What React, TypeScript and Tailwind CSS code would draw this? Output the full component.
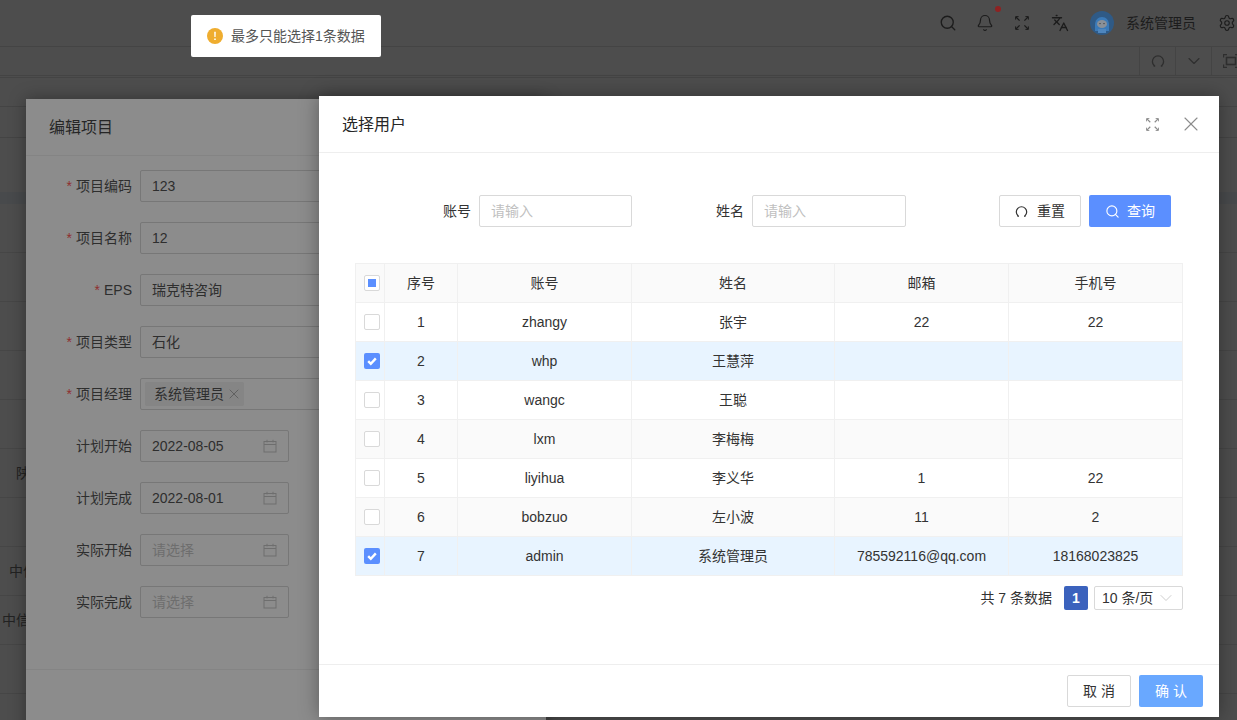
import { Bell, ChevronDown, Languages, Search, Settings, X } from "lucide-react";

const font = { fontFamily: '"Liberation Sans", "Noto Sans CJK SC", sans-serif' };

interface IconProps {
  className?: string;
}

const ExpandIcon = ({ className }: IconProps) => (
  <svg viewBox="0 0 14 14" className={className} fill="none" stroke="currentColor" strokeWidth="1.3">
    <path d="M1 1l3.6 3.6M13 1L9.4 4.6M1 13l3.6-3.6M13 13L9.4 9.4" />
    <path d="M.6 3.6V.6h3M10.4.6h3v3M.6 10.4v3h3M10.4 13.4h3v-3" fill="none" strokeWidth="1" />
  </svg>
);

const RefreshIcon = ({ className }: IconProps) => (
  <svg viewBox="0 0 14 14" className={className} fill="none" stroke="currentColor" strokeWidth="1.3">
    <path d="M3.2 11.6A5.6 5.6 0 1 1 10.8 11.6" />
    <circle cx="10.6" cy="11.9" r="0.9" fill="currentColor" stroke="none" />
    <circle cx="3.4" cy="11.9" r="0.9" fill="currentColor" stroke="none" />
  </svg>
);

const FrameIcon = ({ className }: IconProps) => (
  <svg viewBox="0 0 16 14" className={className} fill="none" stroke="currentColor" strokeWidth="1.2">
    <rect x="3.5" y="3.5" width="9" height="7" strokeWidth="1.6" />
    <path d="M.6 3.5V.6h3.4M12 .6h3.4v2.9M.6 10.5v2.9h3.4M12 13.4h3.4v-2.9" />
  </svg>
);

const CalendarIcon = ({ className }: IconProps) => (
  <svg viewBox="0 0 14 14" className={className} fill="none" stroke="currentColor" strokeWidth="1">
    <rect x="1" y="2.5" width="12" height="10.5" />
    <path d="M1 5.5h12M4 .8v2.6M10 .8v2.6" />
  </svg>
);

const Avatar = () => (
  <svg viewBox="0 0 24 24" className="h-6 w-6 shrink-0">
    <circle cx="12" cy="12" r="12" fill="#2f5a86" />
    <path d="M5 14c0-5 3-8 7-8s7 3 7 8v6H5z" fill="#3b7ab8" />
    <ellipse cx="12" cy="13" rx="5" ry="4" fill="#8a9098" />
    <circle cx="10" cy="12.6" r=".7" fill="#333" />
    <circle cx="14" cy="12.6" r=".7" fill="#333" />
    <path d="M8 18h8v4H8z" fill="#4f86bd" />
  </svg>
);

const Checkbox = ({ state }: { state: "off" | "on" | "some" }) => {
  if (state === "on") {
    return (
      <div className="ml-2 flex h-4 w-4 items-center justify-center rounded-[2px] bg-[#5b8fff]">
        <svg viewBox="0 0 12 12" className="h-3 w-3" fill="none" stroke="#fff" strokeWidth="2.4">
          <path d="M2.2 6.2l2.6 2.6 5-5.4" />
        </svg>
      </div>
    );
  }
  return (
    <div className="ml-2 flex h-4 w-4 items-center justify-center rounded-[2px] border border-[#d9d9d9] bg-white">
      {state === "some" && <div className="h-2 w-2 bg-[#5b8fff]" />}
    </div>
  );
};

const users = [
  { no: 1, account: "zhangy", name: "张宇", mail: "22", phone: "22", bg: "bg-white", on: false },
  { no: 2, account: "whp", name: "王慧萍", mail: "", phone: "", bg: "bg-[#e8f4ff]", on: true },
  { no: 3, account: "wangc", name: "王聪", mail: "", phone: "", bg: "bg-white", on: false },
  { no: 4, account: "lxm", name: "李梅梅", mail: "", phone: "", bg: "bg-[#fafafa]", on: false },
  { no: 5, account: "liyihua", name: "李义华", mail: "1", phone: "22", bg: "bg-white", on: false },
  { no: 6, account: "bobzuo", name: "左小波", mail: "11", phone: "2", bg: "bg-[#fafafa]", on: false },
  { no: 7, account: "admin", name: "系统管理员", mail: "785592116@qq.com", phone: "18168023825", bg: "bg-[#e8f4ff]", on: true },
];

const headers = ["序号", "账号", "姓名", "邮箱", "手机号"];

const formRows = [
  { label: "项目编码", value: "123", required: true },
  { label: "项目名称", value: "12", required: true },
  { label: "EPS", value: "瑞克特咨询", required: true },
  { label: "项目类型", value: "石化", required: true },
];

const dateRows = [
  { label: "计划开始", value: "2022-08-05" },
  { label: "计划完成", value: "2022-08-01" },
  { label: "实际开始", value: "" },
  { label: "实际完成", value: "" },
];

const FormLabel = ({ label, required }: { label: string; required?: boolean }) => (
  <div className="flex w-[106px] shrink-0 items-center justify-end text-sm text-[#2e2e2e]">
    {required && <span className="mr-1 text-[#8f2f2f]">*</span>}
    {label}
  </div>
);

const BackgroundRow = ({ text, pad }: { text?: string; pad?: string }) => (
  <div className={`flex h-[49px] items-center border-b border-[#464646] text-sm text-[#222222] ${pad ?? ""}`}>
    {text}
  </div>
);

function App() {
  return (
    <div style={font} className="relative h-[720px] w-[1237px] overflow-hidden bg-[#4d4d4d]">
      {/* page under the masks */}
      <div className="flex h-[47px] items-center justify-end border-b border-[#444444] text-[#1c1c1c]">
        <Search className="h-[18px] w-[18px]" strokeWidth={1.8} />
        <div className="relative ml-[19px]">
          <Bell className="h-[18px] w-[18px]" strokeWidth={1.6} />
          <div className="absolute -top-[8px] right-[-7px] h-[6px] w-[6px] rounded-full bg-[#8f2222]" />
        </div>
        <ExpandIcon className="ml-[21px] h-[14px] w-[14px]" />
        <Languages className="ml-[22px] h-[18px] w-[18px]" strokeWidth={1.8} />
        <div className="ml-[21px]">
          <Avatar />
        </div>
        <span className="ml-3 text-sm">系统管理员</span>
        <Settings className="ml-[22px] mr-px h-[18px] w-[18px]" strokeWidth={1.5} />
      </div>
      <div className="flex h-[31px] justify-end border-b-[3px] border-double border-[#444444] text-[#2e2e2e]">
        <div className="flex w-9 items-center justify-center border-l border-[#444444]">
          <RefreshIcon className="h-[14px] w-[14px]" />
        </div>
        <div className="flex w-9 items-center justify-center border-l border-[#444444]">
          <ChevronDown className="h-5 w-5" strokeWidth={1.3} />
        </div>
        <div className="flex w-[26px] items-center border-l border-[#444444] pl-[11px]">
          <FrameIcon className="h-[14px] w-[16px] shrink-0" />
        </div>
      </div>
      <div className="h-[29px] border-b border-[#444444]" />
      <div className="h-[31px] border-b border-[#444444]" />
      <div className="h-[54px]" />
      <div className="h-[12px] bg-[#484a4c]" />
      <BackgroundRow />
      <BackgroundRow />
      <BackgroundRow />
      <BackgroundRow />
      <BackgroundRow />
      <BackgroundRow text="陕西" pad="pl-[16px]" />
      <BackgroundRow />
      <BackgroundRow text="中信" pad="pl-[9px]" />
      <BackgroundRow text="中信" pad="pl-[2px]" />
      <BackgroundRow />
      <BackgroundRow />

      {/* first dialog, behind the mask of the second */}
      <div className="absolute left-[26px] top-[99px] h-[640px] w-[520px] bg-[#8c8c8c] shadow-[0_0_16px_rgba(0,0,0,0.35)]">
        <div className="flex h-[57px] items-center border-b border-[#848484] pl-[23px] pt-[2px] text-base text-[#262626]">
          编辑项目
        </div>
        <div className="flex h-[514px] flex-col gap-5 border-b border-[#848484] pt-[14px]">
          {formRows.map((row) => (
            <div key={row.label} className="flex h-8 gap-2">
              <FormLabel label={row.label} required={row.required} />
              <div className="flex h-8 w-[380px] items-center rounded-[2px] border border-[#777777] px-[11px] text-sm text-[#2e2e2e]">
                {row.value}
              </div>
            </div>
          ))}
          <div className="flex h-8 gap-2">
            <FormLabel label="项目经理" required />
            <div className="flex h-8 w-[380px] items-center rounded-[2px] border border-[#777777] px-[4px] text-sm text-[#2e2e2e]">
              <div className="flex h-6 items-center gap-[2px] rounded-[2px] bg-[#858585] pl-[9px] pr-[2px]">
                系统管理员
                <X className="h-4 w-4 text-[#5c5c5c]" strokeWidth={1.3} />
              </div>
            </div>
          </div>
          {dateRows.map((row) => (
            <div key={row.label} className="flex h-8 gap-2">
              <FormLabel label={row.label} />
              <div className="flex h-8 w-[149px] items-center justify-between rounded-[2px] border border-[#777777] pl-[11px] pr-[11px] text-sm">
                <span className={row.value ? "text-[#2e2e2e]" : "text-[#6e6e6e]"}>{row.value || "请选择"}</span>
                <CalendarIcon className="h-[14px] w-[14px] text-[#6e6e6e]" />
              </div>
            </div>
          ))}
        </div>
      </div>

      {/* second dialog */}
      <div className="absolute left-[319px] top-[96px] flex h-[621px] w-[900px] flex-col bg-white shadow-[0_0_18px_rgba(0,0,0,0.35)]">
        <div className="flex h-[57px] shrink-0 items-center border-b border-[#eeeeee] pl-[23px] pr-[16px] pt-[2px] text-base text-[#262626]">
          选择用户
          <ExpandIcon className="ml-auto mb-[2px] h-[13px] w-[13px] text-[#8c8c8c]" />
          <X className="ml-[20px] mb-[3px] h-6 w-6 text-[#8c8c8c]" strokeWidth={1.1} />
        </div>

        <div className="mt-[42px] flex h-8 items-center pl-[124px] pr-[48px] text-sm text-[#333333]">
          <span>账号</span>
          <div className="ml-2 flex h-8 w-[153px] items-center rounded-[2px] border border-[#d9d9d9] px-[11px] text-[#bfbfbf]">
            请输入
          </div>
          <span className="ml-[84px]">姓名</span>
          <div className="ml-2 flex h-8 w-[154px] items-center rounded-[2px] border border-[#d9d9d9] px-[11px] text-[#bfbfbf]">
            请输入
          </div>
          <button className="ml-auto flex h-8 w-[82px] items-center justify-center gap-[9px] rounded-[2px] border border-[#d9d9d9] text-[#333333]">
            <RefreshIcon className="h-[13px] w-[13px]" />
            重置
          </button>
          <button className="ml-2 flex h-8 w-[82px] items-center justify-center gap-[7px] rounded-[2px] bg-[#5b8fff] text-white">
            <Search className="h-[15px] w-[15px]" strokeWidth={1.8} />
            查询
          </button>
        </div>

        <table className="ml-[36px] mt-[36px] w-[827px] table-fixed border-collapse text-center text-sm text-[#333333]">
          <colgroup>
            <col className="w-[29px]" />
            <col className="w-[73px]" />
            <col className="w-[174px]" />
            <col className="w-[203px]" />
            <col className="w-[174px]" />
            <col className="w-[174px]" />
          </colgroup>
          <thead>
            <tr className="h-[39px] bg-[#fafafa]">
              <th className="border border-[#f0f0f0] p-0 font-normal">
                <Checkbox state="some" />
              </th>
              {headers.map((h) => (
                <th key={h} className="border border-[#f0f0f0] p-0 font-normal">
                  {h}
                </th>
              ))}
            </tr>
          </thead>
          <tbody>
            {users.map((u) => (
              <tr key={u.no} className={`h-[39px] ${u.bg}`}>
                <td className="border border-[#f0f0f0] p-0">
                  <Checkbox state={u.on ? "on" : "off"} />
                </td>
                <td className="border border-[#f0f0f0] p-0">{u.no}</td>
                <td className="border border-[#f0f0f0] p-0">{u.account}</td>
                <td className="border border-[#f0f0f0] p-0">{u.name}</td>
                <td className="border border-[#f0f0f0] p-0">{u.mail}</td>
                <td className="border border-[#f0f0f0] p-0">{u.phone}</td>
              </tr>
            ))}
          </tbody>
        </table>

        <div className="mt-[10px] flex h-6 items-center justify-end pr-[36px] text-sm text-[#333333]">
          <span>共 7 条数据</span>
          <div className="ml-3 flex h-6 w-6 items-center justify-center rounded-[2px] bg-[#3b62bd] font-bold text-white">
            1
          </div>
          <div className="ml-[6px] flex h-6 w-[89px] items-center justify-between rounded-[2px] border border-[#d9d9d9] pl-[7px] pr-[6px]">
            10 条/页
            <ChevronDown className="h-5 w-5 text-[#c4c4c4]" strokeWidth={1} />
          </div>
        </div>

        <div className="mt-auto flex h-[53px] shrink-0 justify-end gap-2 border-t border-[#eeeeee] pr-[16px] pt-[10px] text-sm">
          <button className="h-8 w-16 rounded-[2px] border border-[#d9d9d9] text-[#333333]">取 消</button>
          <button className="h-8 w-16 rounded-[2px] bg-[#69a8ff] text-white">确 认</button>
        </div>
      </div>

      {/* toast */}
      <div className="absolute left-[191px] top-[15px] flex h-[42px] w-[190px] items-center gap-2 rounded-[2px] bg-white pl-4 text-sm text-[#555555]">
        <svg viewBox="0 0 16 16" className="h-4 w-4 shrink-0">
          <circle cx="8" cy="8" r="8" fill="#efad2f" />
          <path d="M7.2 3.8h1.6l-.2 5.2H7.4zM7.2 10.4h1.6V12H7.2z" fill="#fff" />
        </svg>
        最多只能选择1条数据
      </div>
    </div>
  );
}

export default App;
